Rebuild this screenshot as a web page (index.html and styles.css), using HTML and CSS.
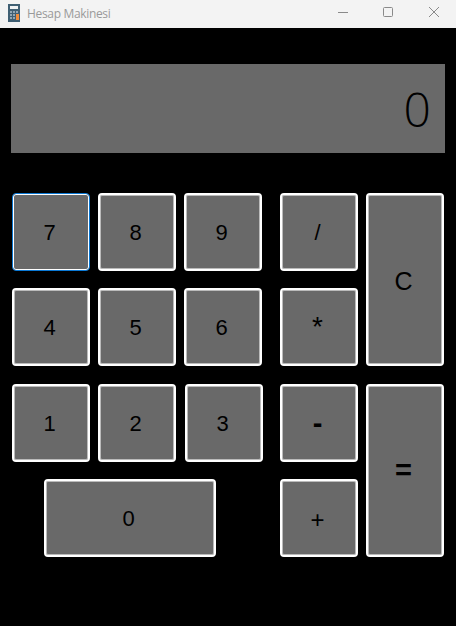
FILE: index.html
```html
<!DOCTYPE html>
<html lang="tr">
<head>
<meta charset="utf-8">
<title>Hesap Makinesi</title>
<link rel="stylesheet" href="styles.css">
</head>
<body>
<header class="titlebar">
  <svg class="app-icon" width="12" height="18" viewBox="0 0 12 18">
    <rect class="ic-body" x="0" y="0" width="12" height="18"/>
    <rect class="ic-screen" x="2" y="2" width="8" height="3"/>
    <path class="ic-dots" d="M2 7h2v2H2zM5 7h2v2H5zM8 7h2v2H8zM2 10h2v2H2zM5 10h2v2H5zM2 13h2v2H2zM5 13h2v2H5z"/>
    <rect class="ic-eq" x="8" y="10" width="3" height="6"/>
  </svg>
  <span class="title">Hesap Makinesi</span>
  <div class="controls">
    <svg class="ctl" width="12" height="12" viewBox="0 0 12 12"><path d="M2 6.5H12"/></svg>
    <svg class="ctl" width="12" height="12" viewBox="0 0 12 12"><rect x="1.5" y="1.5" width="9" height="9" rx="1"/></svg>
    <svg class="ctl" width="12" height="12" viewBox="0 0 12 12"><path d="M1 1L11 11M11 1L1 11"/></svg>
  </div>
</header>
<main class="calc">
  <output class="display">0</output>
  <div class="keys">
    <button class="key focus">7</button>
    <button class="key">8</button>
    <button class="key">9</button>
    <button class="key op col-a">/</button>
    <button class="key op tall col-b">C</button>
    <button class="key">4</button>
    <button class="key">5</button>
    <button class="key">6</button>
    <button class="key op star col-a">*</button>
    <button class="key">1</button>
    <button class="key">2</button>
    <button class="key nudge">3</button>
    <button class="key op bold col-a">-</button>
    <button class="key op bold equals tall col-b">=</button>
    <button class="key zero">0</button>
    <button class="key op plus col-a">+</button>
  </div>
</main>
</body>
</html>
```
FILE: styles.css
```css
* { box-sizing: border-box; }
html, body { margin: 0; height: 100%; }
body { background: #000; overflow: hidden; font-family: "Liberation Sans", Arial, sans-serif; }

.titlebar {
  height: 28px;
  background: #f3f3f3;
  display: flex;
  align-items: center;
  padding: 0 0 2px 8px;
}
.app-icon { flex: none; }
.ic-body { fill: #3f5f73; }
.ic-screen { fill: #eef1f3; }
.ic-dots { fill: #8fa6b4; }
.ic-eq { fill: #ee8b3a; }
.title {
  margin-left: 7px;
  font: 12px "Open Sans", sans-serif;
  letter-spacing: -0.33px;
  color: #9a9a9a;
}
.controls {
  margin-left: auto;
  display: flex;
  gap: 34px;
  padding: 0 16px 2px 0;
}
.ctl { fill: none; stroke: #8a8a8a; stroke-width: 1; }

.calc { padding: 36px 11px 0; }
.display {
  display: block;
  height: 89px;
  background: #696969;
  color: #000;
  font: 300 48px/89px "Open Sans", sans-serif;
  text-align: right;
  padding-right: 14px;
}
.keys {
  display: grid;
  margin: 40px 0 0 1px;
  grid-template-columns: 78px 78px 78px 2px 78px 78px;
  grid-auto-rows: 78px;
  column-gap: 8px;
  row-gap: 17.33px;
}
.key {
  background: #696969;
  border: 2px solid #fff;
  border-radius: 4px;
  box-shadow: inset 0 0 0 1px rgba(255, 255, 255, .55);
  color: #000;
  font: 22px "Liberation Sans", sans-serif;
  padding: 2px 3px 0 0;
}
.focus { border-color: #0a78d4; box-shadow: inset 0 0 0 1px #fff; border-width: 1px; }
.col-a { grid-column: 5; }
.col-b { grid-column: 6; }
.tall { grid-row: span 2; font-size: 25px; padding-top: 4px; }
.bold { font-weight: 700; font-size: 29px; }
.equals { padding-top: 0; }
.star { font-size: 28px; padding-top: 0; }
.plus { padding-top: 4px; font-size: 24px; }
.nudge { transform: translateX(1px); }
.zero { grid-column: 1 / 4; margin-left: 32px; margin-right: 46px; padding-top: 3px; }
```
